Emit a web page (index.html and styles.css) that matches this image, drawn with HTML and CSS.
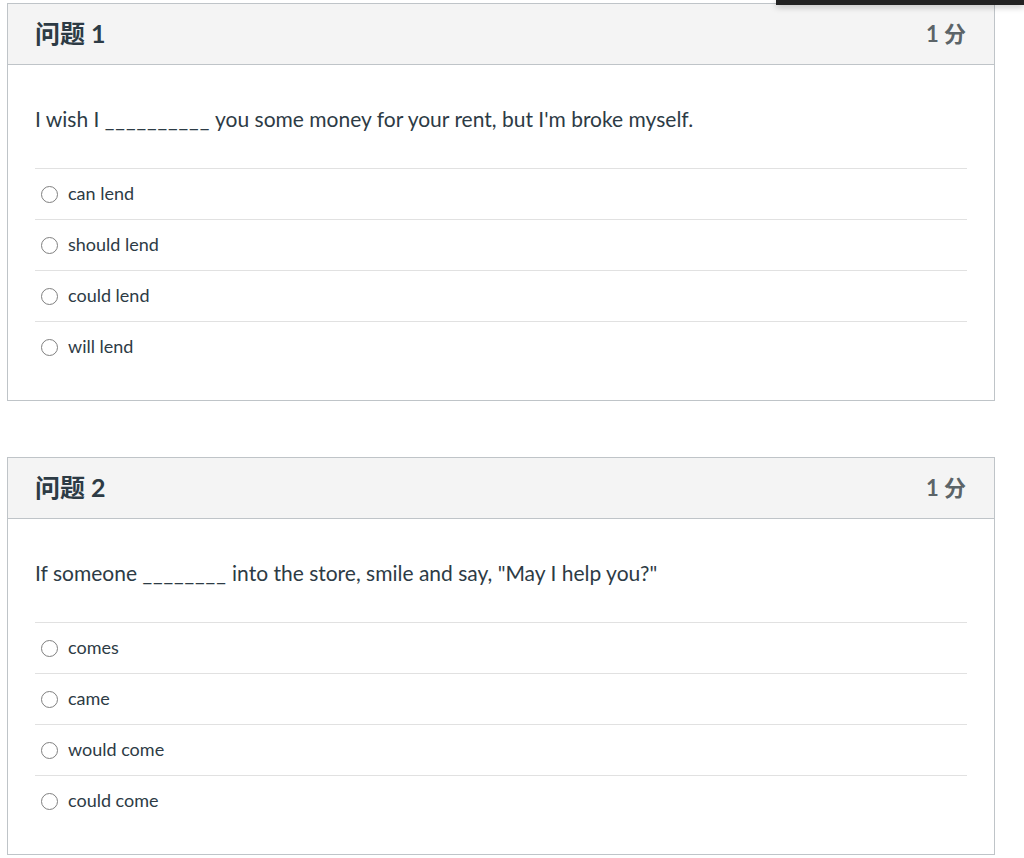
FILE: index.html
```html
<!DOCTYPE html>
<html lang="zh-CN">
<head>
    <meta charset="UTF-8">
    <title>测验</title>
    <link rel="stylesheet" href="styles.css">
</head>
<body>
    <div class="top-bar"></div>
    <div class="quiz">
        <!-- 问题 1 -->
        <div class="question">
            <div class="question-header">
                <h2 class="question-title">问题 1</h2>
                <span class="question-points">1 分</span>
            </div>
            <div class="question-body">
                <p class="question-text">I wish I <span class="blank">__________</span> you some money for your rent, but I'm broke myself.</p>
                <div class="answer"><span class="radio"></span>can lend</div>
                <div class="answer"><span class="radio"></span>should lend</div>
                <div class="answer"><span class="radio"></span>could lend</div>
                <div class="answer"><span class="radio"></span>will lend</div>
            </div>
        </div>

        <!-- 问题 2 -->
        <div class="question">
            <div class="question-header">
                <h2 class="question-title">问题 2</h2>
                <span class="question-points">1 分</span>
            </div>
            <div class="question-body">
                <p class="question-text">If someone <span class="blank">________</span> into the store, smile and say, "May I help you?"</p>
                <div class="answer"><span class="radio"></span>comes</div>
                <div class="answer"><span class="radio"></span>came</div>
                <div class="answer"><span class="radio"></span>would come</div>
                <div class="answer"><span class="radio"></span>could come</div>
            </div>
        </div>
    </div>
</body>
</html>
```

FILE: styles.css
```css
body {
    margin: 0;
    font-family: Lato, "Noto Sans CJK SC", sans-serif;
    color: #2d3b45;
    background-color: #fff;
}
.top-bar {
    position: absolute;
    top: 0;
    left: 776px;
    right: 0;
    height: 5px;
    background-color: #222;
    box-shadow: 0 2px 6px rgba(0, 0, 0, 0.25);
}
.quiz {
    padding: 3px 0 0 7px;
}
.question {
    width: 988px;
    box-sizing: border-box;
    border: 1px solid #bfc4c8;
    margin-bottom: 56px;
}
.question-header {
    height: 61px;
    box-sizing: border-box;
    display: flex;
    align-items: center;
    justify-content: space-between;
    padding: 0 28px 5px 27px;
    background-color: #f4f4f4;
    border-bottom: 1px solid #bfc4c8;
}
.question-title {
    margin: 0;
    font-size: 25px;
    font-weight: bold;
}
.question-points {
    font-size: 22px;
    font-weight: bold;
    color: #5c6468;
}
.question-body {
    padding: 0 27px 28px;
}
.question-text {
    margin: 0;
    padding: 42px 0 37px;
    font-size: 21px;
    line-height: 24px;
}
.blank {
    letter-spacing: 0.9px;
}
.answer {
    height: 51px;
    box-sizing: border-box;
    display: flex;
    align-items: center;
    padding-bottom: 2px;
    border-top: 1px solid #e1e1e1;
    font-size: 18px;
}
.radio {
    width: 15px;
    height: 15px;
    border: 1.5px solid #808080;
    border-radius: 50%;
    margin: 2px 10px 0 6px;
}
```
